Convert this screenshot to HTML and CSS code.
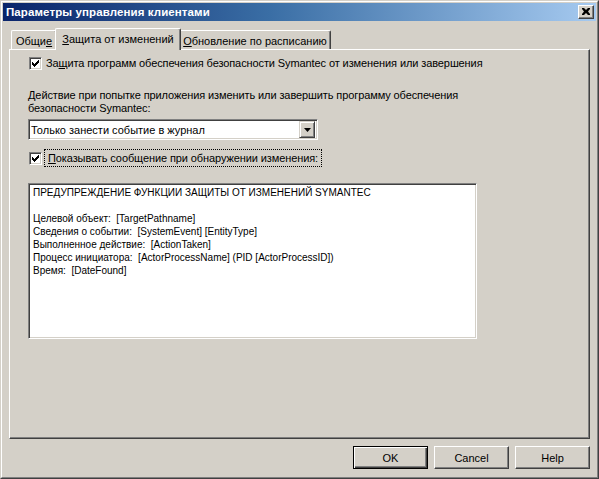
FILE: index.html
```html
<!DOCTYPE html>
<html lang="ru">
<head>
<meta charset="utf-8">
<title>Параметры управления клиентами</title>
<link rel="stylesheet" href="styles.css">
</head>
<body>
<div class="window">
  <div class="window-inner">
    <div class="titlebar">
      <span class="title">Параметры управления клиентами</span>
      <span class="close-btn">
        <svg width="8" height="7" viewBox="0 0 8 7"><path d="M0 0h2l2 2 2-2h2v1L6 3.5 8 6v1H6L4 5 2 7H0V6l2-2.5L0 1z" fill="#000"/></svg>
      </span>
    </div>
    <div class="client">
      <div class="tabs">
        <div class="tab tab-general">Общи<u>е</u></div>
        <div class="tab tab-protect active"><u>З</u>ащита от изменений</div>
        <div class="tab tab-schedule"><u>О</u>бновление по расписанию</div>
      </div>
      <div class="panel">
        <div class="check-row row-protect">
          <span class="checkbox"><svg width="7" height="7" viewBox="0 0 7 7"><path d="M0 2h1v1h1v1h1V3h1V2h1V1h1V0h1v3H6v1H5v1H4v1H3v1H2V6H1V5H0z" fill="#000"/></svg></span>
          <span class="label">За<u>щ</u>ита программ обеспечения безопасности Symantec от изменения или завершения</span>
        </div>
        <div class="action-label"><u>Д</u>ействие при попытке приложения изменить или завершить программу обеспечения безопасности Symantec:</div>
        <div class="select">
          <span class="select-text">Только занести событие в журнал</span>
          <span class="select-btn"><svg width="7" height="4" viewBox="0 0 7 4"><path d="M0 0h7L3.5 4z" fill="#000"/></svg></span>
        </div>
        <div class="check-row row-show">
          <span class="checkbox"><svg width="7" height="7" viewBox="0 0 7 7"><path d="M0 2h1v1h1v1h1V3h1V2h1V1h1V0h1v3H6v1H5v1H4v1H3v1H2V6H1V5H0z" fill="#000"/></svg></span>
          <span class="label focus"><u>П</u>оказывать сообщение при обнаружении изменения:</span>
        </div>
        <div class="message">
          <div class="msg-line">ПРЕДУПРЕЖДЕНИЕ ФУНКЦИИ ЗАЩИТЫ ОТ ИЗМЕНЕНИЙ SYMANTEC</div>
          <div class="msg-line">&nbsp;</div>
          <div class="msg-line">Целевой объект:&nbsp; [TargetPathname]</div>
          <div class="msg-line">Сведения о событии:&nbsp; [SystemEvent] [EntityType]</div>
          <div class="msg-line">Выполненное действие:&nbsp; [ActionTaken]</div>
          <div class="msg-line">Процесс инициатора:&nbsp; [ActorProcessName] (PID [ActorProcessID])</div>
          <div class="msg-line">Время:&nbsp; [DateFound]</div>
        </div>
      </div>
      <div class="buttons">
        <div class="btn default"><span>OK</span></div>
        <div class="btn"><span>Cancel</span></div>
        <div class="btn"><span>Help</span></div>
      </div>
    </div>
  </div>
</div>
</body>
</html>
```
FILE: styles.css
```css
* { box-sizing: border-box; }
html, body { margin: 0; padding: 0; }
body {
  background: #d4d0c8;
  font-family: "Liberation Sans", Arial, sans-serif;
  font-size: 11px;
  color: #000;
}
u { text-decoration: underline; text-underline-offset: 1px; }

.window {
  width: 599px;
  height: 479px;
  border: 1px solid;
  border-color: #d4d0c8 #404040 #404040 #d4d0c8;
  background: #d4d0c8;
}
.window-inner {
  height: 100%;
  border: 1px solid;
  border-color: #ffffff #808080 #808080 #ffffff;
  padding: 1px;
  display: flex;
  flex-direction: column;
}

.titlebar {
  height: 18px;
  flex: none;
  background: linear-gradient(to right, #0a246a 0%, #3a6ea5 45%, #a6caf0 100%);
  display: flex;
  align-items: center;
  justify-content: space-between;
  padding: 0 2px 0 3px;
}
.title {
  color: #fff;
  font-weight: bold;
  font-size: 11.5px;
  letter-spacing: 0.1px;
}
.close-btn {
  width: 16px;
  height: 14px;
  background: #d4d0c8;
  border: 1px solid;
  border-color: #ffffff #404040 #404040 #ffffff;
  box-shadow: inset -1px -1px 0 #808080;
  display: flex;
  align-items: center;
  justify-content: center;
  padding: 0 1px 1px 0;
}
.close-btn svg { display: block; }

.client {
  flex: 1;
  padding: 7px 6px 0 6px;
  display: flex;
  flex-direction: column;
}

.tabs {
  display: flex;
  align-items: flex-end;
  padding-left: 2px;
  height: 21px;
  position: relative;
  z-index: 1;
}
.tab {
  height: 19px;
  border-top: 1px solid #fff;
  border-left: 1px solid #fff;
  border-right: 1px solid #404040;
  box-shadow: inset -1px 0 0 #808080;
  border-radius: 2px 2px 0 0;
  display: flex;
  align-items: center;
  justify-content: center;
  padding-top: 1px;
  white-space: nowrap;
  background: #d4d0c8;
}
.tab-general { width: 46px; }
.tab-protect { width: 122px; }
.tab-schedule { width: 152px; }
.tab.active {
  height: 22px;
  margin: 0 -2px -1px -2px;
  width: 126px;
  padding-bottom: 2px;
  position: relative;
  z-index: 2;
}

.panel {
  width: 581px;
  height: 390px;
  border: 1px solid;
  border-color: #ffffff #404040 #404040 #ffffff;
  box-shadow: inset -1px -1px 0 #808080;
  padding: 6px 0 0 18px;
}

.check-row {
  display: flex;
  align-items: center;
  height: 14px;
}
.row-protect { margin-left: 1px; }
.checkbox {
  width: 13px;
  height: 13px;
  flex: none;
  background: #fff;
  border: 1px solid;
  border-color: #808080 #ffffff #ffffff #808080;
  box-shadow: inset 1px 1px 0 #404040, inset -1px -1px 0 #d4d0c8;
  display: flex;
  align-items: center;
  justify-content: center;
}
.checkbox svg { display: block; }
.label {
  margin-left: 4px;
  white-space: nowrap;
  letter-spacing: -0.1px;
}

.action-label {
  margin-top: 19px;
  width: 440px;
  line-height: 13px;
  letter-spacing: -0.1px;
}

.select {
  margin-top: 4px;
  width: 290px;
  height: 21px;
  background: #fff;
  border: 1px solid;
  border-color: #808080 #ffffff #ffffff #808080;
  box-shadow: inset 1px 1px 0 #404040, inset -1px -1px 0 #d4d0c8;
  display: flex;
  align-items: center;
  justify-content: space-between;
  padding: 2px 2px 2px 2px;
}
.select-btn {
  width: 16px;
  height: 17px;
  background: #d4d0c8;
  border: 1px solid;
  border-color: #d4d0c8 #404040 #404040 #d4d0c8;
  box-shadow: inset 1px 1px 0 #fff, inset -1px -1px 0 #808080;
  display: flex;
  align-items: center;
  justify-content: center;
}
.select-btn svg { display: block; }

.row-show {
  margin-top: 11px;
  margin-left: 1px;
}
.focus {
  outline: 1px dotted #000;
  outline-offset: 2px;
  padding: 0 1px;
  margin-left: 5px;
}

.message {
  margin-top: 18px;
  width: 449px;
  height: 156px;
  background: #fff;
  border: 1px solid;
  border-color: #808080 #ffffff #ffffff #808080;
  box-shadow: inset 1px 1px 0 #404040, inset -1px -1px 0 #d4d0c8;
  padding: 2px 4px;
  font-size: 10px;
  line-height: 13px;
}
.msg-line { white-space: pre; }

.buttons {
  display: flex;
  justify-content: flex-end;
  gap: 6px;
  margin-top: 7px;
  width: 581px;
}
.btn {
  width: 75px;
  height: 23px;
  background: #d4d0c8;
  border: 1px solid;
  border-color: #ffffff #404040 #404040 #ffffff;
  box-shadow: inset -1px -1px 0 #808080;
  display: flex;
  align-items: center;
  justify-content: center;
}
.btn.default {
  border: 1px solid #000;
  box-shadow: inset 1px 1px 0 #fff, inset -1px -1px 0 #404040, inset -2px -2px 0 #808080;
}
```
